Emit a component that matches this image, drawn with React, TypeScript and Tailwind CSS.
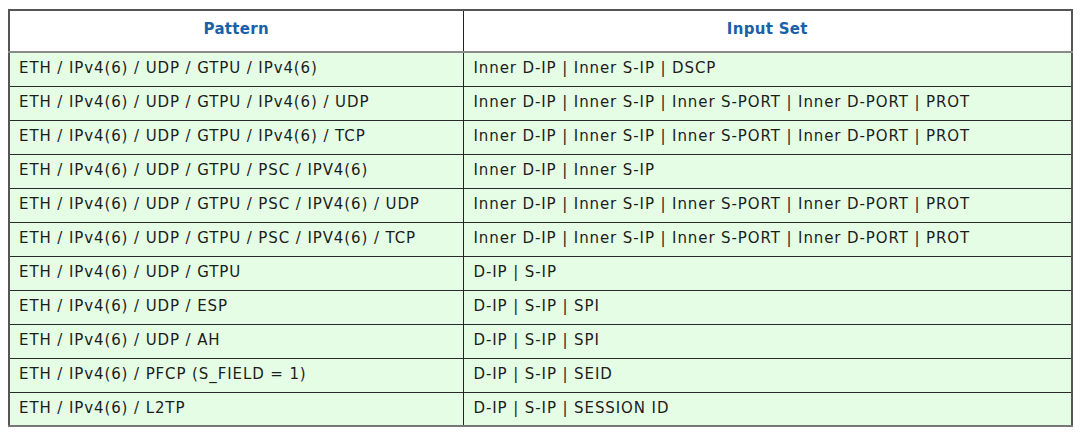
const ROWS: [string, string][] = [
  ["ETH / IPv4(6) / UDP / GTPU / IPv4(6)", "Inner D-IP | Inner S-IP | DSCP"],
  ["ETH / IPv4(6) / UDP / GTPU / IPv4(6) / UDP", "Inner D-IP | Inner S-IP | Inner S-PORT | Inner D-PORT | PROT"],
  ["ETH / IPv4(6) / UDP / GTPU / IPv4(6) / TCP", "Inner D-IP | Inner S-IP | Inner S-PORT | Inner D-PORT | PROT"],
  ["ETH / IPv4(6) / UDP / GTPU / PSC / IPV4(6)", "Inner D-IP | Inner S-IP"],
  ["ETH / IPv4(6) / UDP / GTPU / PSC / IPV4(6) / UDP", "Inner D-IP | Inner S-IP | Inner S-PORT | Inner D-PORT | PROT"],
  ["ETH / IPv4(6) / UDP / GTPU / PSC / IPV4(6) / TCP", "Inner D-IP | Inner S-IP | Inner S-PORT | Inner D-PORT | PROT"],
  ["ETH / IPv4(6) / UDP / GTPU", "D-IP | S-IP"],
  ["ETH / IPv4(6) / UDP / ESP", "D-IP | S-IP | SPI"],
  ["ETH / IPv4(6) / UDP / AH", "D-IP | S-IP | SPI"],
  ["ETH / IPv4(6) / PFCP (S_FIELD = 1)", "D-IP | S-IP | SEID"],
  ["ETH / IPv4(6) / L2TP", "D-IP | S-IP | SESSION ID"],
];

export default function App() {
  return (
    <div className="h-[437px] w-[1080px] bg-white pl-[8px] pt-[9px] font-['DejaVu_Sans',Verdana,sans-serif]">
      <table className="w-[1065px] table-fixed border-collapse border-2 border-[#555555] text-[15px] text-[#1c1c1c]">
        <colgroup>
          <col className="w-[454px]" />
          <col />
        </colgroup>
        <thead>
          <tr className="h-[42px] border-b-2 border-[#8a8a8a] bg-white">
            <th className="border-r border-[#222] pb-[3px] text-center text-[15px] font-bold tracking-[0.3px] text-[#1a5fa8]">
              Pattern
            </th>
            <th className="pb-[3px] text-center text-[15px] font-bold tracking-[0.3px] text-[#1a5fa8]">Input Set</th>
          </tr>
        </thead>
        <tbody>
          {ROWS.map(([p, s], i) => (
            <tr key={i} className="h-[34px] border-b border-[#2a2a2a] bg-[#e5fde5] last:border-b-2 last:border-[#777]">
              <td className="border-r border-[#222] pb-[1px] pl-[9px] leading-none tracking-[0.9px]">{p}</td>
              <td className="pb-[1px] pl-[10px] leading-none tracking-[0.9px]">{s}</td>
            </tr>
          ))}
        </tbody>
      </table>
    </div>
  );
}
